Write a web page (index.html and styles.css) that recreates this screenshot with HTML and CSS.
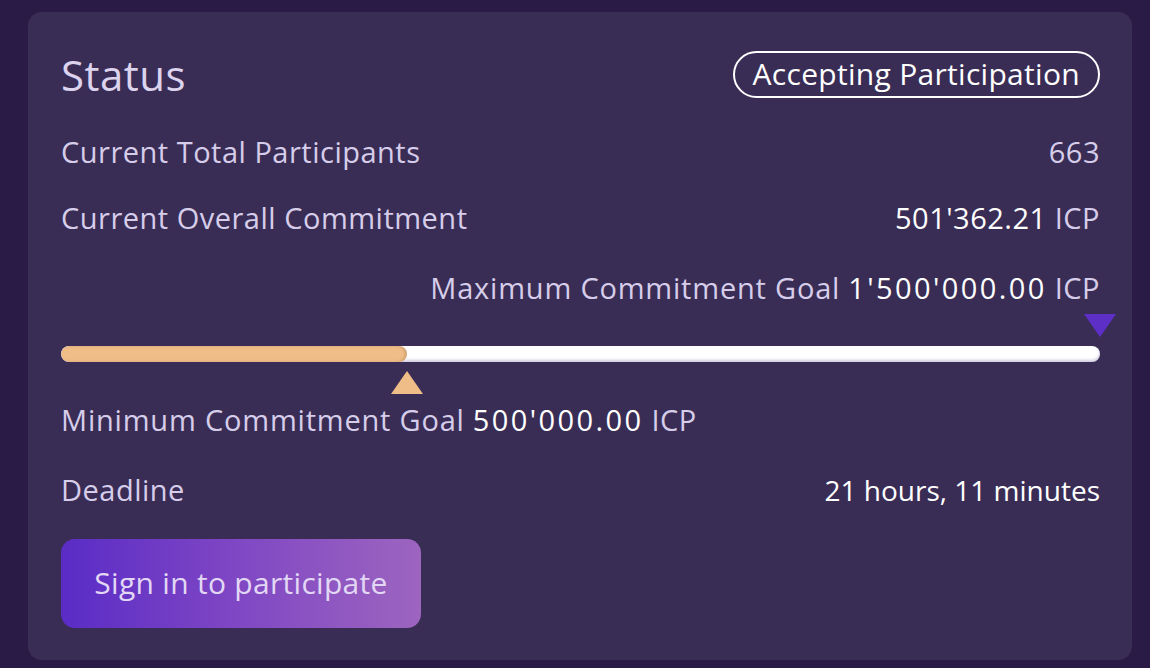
FILE: index.html
```html
<!DOCTYPE html>
<html lang="en">
<head>
<meta charset="utf-8">
<link rel="stylesheet" href="styles.css">
</head>
<body>
<div class="page">
  <section class="card">
    <header class="card-head">
      <h2 class="title">Status</h2>
      <span class="badge">Accepting Participation</span>
    </header>
    <div class="row row-first">
      <span class="label">Current Total Participants</span>
      <span class="value muted">663</span>
    </div>
    <div class="row row-second">
      <span class="label">Current Overall Commitment</span>
      <span class="value"><span class="num">501'362.21</span> <span class="unit">ICP</span></span>
    </div>
    <div class="row row-max">
      <span class="value"><span class="label goal-label">Maximum Commitment Goal</span> <span class="num goal">1'500'000.00</span> <span class="unit">ICP</span></span>
    </div>
    <div class="progress">
      <div class="bar">
        <div class="fill" style="width: 33.333%"></div>
      </div>
      <span class="marker marker-max"></span>
      <span class="marker marker-min" style="left: 33.333%"></span>
    </div>
    <div class="row row-min">
      <span class="value"><span class="label goal-label">Minimum Commitment Goal</span> <span class="num goal">500'000.00</span> <span class="unit">ICP</span></span>
    </div>
    <div class="row row-deadline">
      <span class="label">Deadline</span>
      <span class="value num time">21 hours, 11 minutes</span>
    </div>
    <button class="cta" type="button">Sign in to participate</button>
  </section>
</div>
</body>
</html>
```

FILE: styles.css
```css
* { box-sizing: border-box; }
html, body {
  margin: 0;
  padding: 0;
  background: #2a1a46;
}
body {
  width: 1150px;
  height: 668px;
  overflow: hidden;
  font-family: "Open Sans", "Liberation Sans", sans-serif;
  color: #d6cdea;
}
.page {
  padding: 12px 18px 8px 28px;
}
.card {
  width: 1104px;
  height: 648px;
  background: #3a2d55;
  border-radius: 14px;
  padding: 39px 32px 0 33px;
  display: flex;
  flex-direction: column;
}
.card-head {
  display: flex;
  justify-content: space-between;
  align-items: center;
  height: 47px;
}
.title {
  margin: 0;
  font-size: 42px;
  font-weight: 400;
  color: #dcd3ee;
  line-height: 47px;
  letter-spacing: 0.5px;
}
.badge {
  display: inline-flex;
  align-items: center;
  height: 47px;
  padding: 0 18px 2px;
  border: 2px solid #ffffff;
  border-radius: 24px;
  color: #ffffff;
  font-size: 30px;
  letter-spacing: 0.3px;
}
.row {
  display: flex;
  justify-content: space-between;
  align-items: center;
  height: 36px;
  font-size: 29px;
  line-height: 36px;
  letter-spacing: 0.5px;
}
.row-first { margin-top: 36px; }
.row-second { margin-top: 30px; }
.row-max { margin-top: 34px; justify-content: flex-end; }
.row-min { justify-content: flex-start; }
.row-deadline { margin-top: 34px; }
.label { color: #d6cdea; }
.goal-label { letter-spacing: 0.8px; }
.num { color: #ffffff; }
.goal { letter-spacing: 2.4px; }
.unit { color: #d6cdea; }
.muted { color: #d6cdea; }
.time { font-size: 28px; letter-spacing: 0; }
.progress {
  position: relative;
  height: 96px;
  padding-top: 40px;
}
.bar {
  height: 16px;
  border-radius: 8px;
  background: #ffffff;
  box-shadow: inset 0 -2px 3px rgba(120, 100, 160, 0.35);
  overflow: hidden;
}
.fill {
  height: 100%;
  background: #efbd88;
  border-radius: 8px;
  box-shadow: inset -2px 0 3px rgba(150, 110, 70, 0.35);
}
.marker {
  position: absolute;
  width: 0;
  height: 0;
  border-left: 16px solid transparent;
  border-right: 16px solid transparent;
}
.marker-max {
  top: 8px;
  right: -16px;
  border-top: 23px solid #5d2fc7;
}
.marker-min {
  top: 65px;
  margin-left: -16px;
  border-bottom: 23px solid #efbd88;
}
.cta {
  margin-top: 31px;
  width: 360px;
  height: 89px;
  border: 0;
  border-radius: 14px;
  background: linear-gradient(90deg, #5a2cc6 0%, #7d45c4 45%, #9d65bf 100%);
  color: #e2d7f4;
  font-family: inherit;
  font-size: 30px;
  letter-spacing: 0.3px;
  padding: 0 0 2px;
  text-align: center;
}
```
